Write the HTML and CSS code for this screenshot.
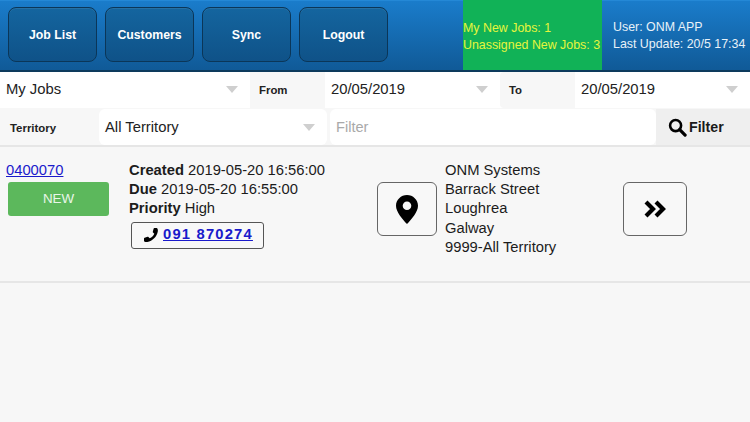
FILE: index.html
```html
<!DOCTYPE html>
<html lang="en">
<head>
<meta charset="utf-8">
<title>Job List</title>
<link rel="stylesheet" href="styles.css">
</head>
<body>
<header class="topbar">
  <nav class="nav">
    <button class="nav-btn">Job List</button>
    <button class="nav-btn">Customers</button>
    <button class="nav-btn">Sync</button>
    <button class="nav-btn">Logout</button>
  </nav>
  <div class="new-jobs">
    <div>My New Jobs: 1</div>
    <div>Unassigned New Jobs: 3</div>
  </div>
  <div class="user-info">
    <div>User: ONM APP</div>
    <div>Last Update: 20/5 17:34</div>
  </div>
</header>
<section class="filter-row row-one">
  <div class="select select-jobs"><span>My Jobs</span><i class="caret"></i></div>
  <div class="label label-from">From</div>
  <div class="select select-date"><span>20/05/2019</span><i class="caret"></i></div>
  <div class="label label-to">To</div>
  <div class="select select-date"><span>20/05/2019</span><i class="caret"></i></div>
</section>
<section class="filter-row row-two">
  <div class="label label-territory">Territory</div>
  <div class="select select-territory"><span>All Territory</span><i class="caret"></i></div>
  <div class="filter-input">Filter</div>
  <div class="filter-btn">
    <svg class="search-icon" viewBox="0 0 20 20" aria-hidden="true"><circle cx="8" cy="8" r="5.8" fill="none" stroke="#000" stroke-width="2.7"/><path d="M12.3 12.3 18 18" stroke="#000" stroke-width="3.4" stroke-linecap="round"/></svg>
    <span>Filter</span>
  </div>
</section>
<main class="jobs">
  <article class="job">
    <div class="job-id">
      <a href="#" class="link">0400070</a>
      <div class="badge">NEW</div>
    </div>
    <div class="job-meta">
      <div><b>Created</b> 2019-05-20 16:56:00</div>
      <div><b>Due</b> 2019-05-20 16:55:00</div>
      <div><b>Priority</b> High</div>
      <div class="phone">
        <svg class="phone-icon" viewBox="0 0 16 16" aria-hidden="true"><path d="M15 11.6v2.2c0 .4-.2.7-.6.9-.9.4-1.800.5-2.700.3C6.300 13.900 2.300 9.900 1.200 4.500 1 3.500 1.100 2.600 1.500 1.700c.2-.4.500-.6.900-.6h2.200c.4 0 .7.200.8.600l.8 3c.1.300 0 .6-.2.800L4.700 6.700c.9 2 2.500 3.600 4.600 4.600l1.300-1.300c.2-.2.5-.3.8-.2l3 .9c.4.100.6.400.6.900z" transform="matrix(-1 0 0 1 16 0)" fill="#000"/></svg>
        <a href="#" class="link phone-link">091 870274</a>
      </div>
    </div>
    <button class="icon-btn map-btn" aria-label="Map">
      <svg class="pin-icon" viewBox="0 0 22 29" aria-hidden="true"><path fill-rule="evenodd" d="M11 0C5 0 0 4.800 0 10.800 0 17 6.500 24.500 11 29c4.500-4.500 11-12 11-18.200C22 4.800 17 0 11 0zm0 6.500a4.300 4.300 0 1 1 0 8.600 4.300 4.300 0 0 1 0-8.600z" fill="#000"/></svg>
    </button>
    <div class="job-address">
      <div>ONM Systems</div>
      <div>Barrack Street</div>
      <div>Loughrea</div>
      <div>Galway</div>
      <div>9999-All Territory</div>
    </div>
    <button class="icon-btn next-btn" aria-label="Open">
      <svg class="next-icon" viewBox="0 0 24 20" aria-hidden="true"><path d="M3 3l7 7-7 7M13 3l7 7-7 7" fill="none" stroke="#000" stroke-width="4.200" stroke-linejoin="miter"/></svg>
    </button>
  </article>
</main>
</body>
</html>
```

FILE: styles.css
```css
* { box-sizing: border-box; }
html, body { margin: 0; height: 100%; }
body {
  width: 750px;
  height: 422px;
  overflow: hidden;
  background: #f7f7f7;
  color: #1c1c1c;
  font-family: "Liberation Sans", Arial, sans-serif;
  font-size: 14.75px;
  display: flex;
  flex-direction: column;
}
.topbar {
  height: 72px;
  flex: none;
  display: flex;
  background: linear-gradient(#1a7ccb, #105a97);
  border-bottom: 2px solid #0d3a5c;
  border-top: 1px solid #2488d6;
}
.nav {
  width: 463px;
  flex: none;
  display: flex;
  gap: 8px;
  padding: 6px 0 0 8px;
}
.nav-btn {
  width: 89px;
  height: 55px;
  border: 1px solid #0b3658;
  border-radius: 8px;
  background: linear-gradient(#14659f, #0f5288);
  color: #fff;
  font: bold 12.3px "Liberation Sans", Arial, sans-serif;
  padding: 0;
  box-shadow: inset 0 1px 0 rgba(255,255,255,.08);
}
.new-jobs {
  width: 139px;
  flex: none;
  margin-top: -1px;
  background: #11b257;
  color: #e6f53c;
  font-size: 12.4px;
  line-height: 17px;
  padding-top: 20px;
  white-space: nowrap;
}
.user-info {
  flex: 1;
  color: #e8f1f8;
  font-size: 12.4px;
  line-height: 17px;
  padding: 18px 0 0 11px;
  white-space: nowrap;
}
.filter-row { display: flex; flex: none; }
.row-one { height: 36px; background: #fff; }
.row-two {
  height: 39px;
  padding-top: 1px;
  background: #f7f7f7;
  border-bottom: 2px solid #e6e6e6;
}
.select {
  display: flex;
  flex: none;
  align-items: center;
  justify-content: space-between;
  background: #fff;
  color: #222;
  font-size: 14.8px;
}
.select-jobs { width: 250px; padding: 0 12px 2px 6px; }
.select-date { width: 175px; padding: 0 12px 2px 6px; }
.select-territory {
  width: 228px;
  padding: 0 12px 0 6px;
  border-radius: 6px;
}
.caret {
  width: 0;
  height: 0;
  border-left: 6px solid transparent;
  border-right: 6px solid transparent;
  border-top: 7px solid #cfcfcf;
}
.label {
  display: flex;
  flex: none;
  align-items: center;
  background: #f7f7f7;
  color: #222;
  font-weight: bold;
  font-size: 11.4px;
}
.label-from { width: 75px; padding: 0 0 0 9px; }
.label-to { width: 75px; padding: 0 0 0 9px; border-radius: 4px 0 0 4px; }
.label-territory { width: 99px; padding: 2px 0 0 10px; }
.filter-input {
  width: 326px;
  flex: none;
  margin-left: 3px;
  display: flex;
  align-items: center;
  padding-left: 6px;
  background: #fff;
  border-radius: 6px;
  color: #a9a9a9;
  font-size: 14.6px;
}
.filter-btn {
  flex: 1;
  display: flex;
  align-items: center;
  gap: 2px;
  padding-left: 12px;
  background: #efefef;
  color: #1a1a1a;
  font-weight: bold;
  font-size: 14.2px;
}
.search-icon { width: 19px; height: 19px; }
.jobs { flex: 1; }
.job {
  height: 136px;
  border-bottom: 2px solid #e6e6e6;
  display: flex;
  align-items: flex-start;
  line-height: 19.2px;
}
.job-id { width: 129px; flex: none; padding: 14px 0 0 6px; }
.link { color: #1a1acb; text-decoration: underline; }
.badge {
  width: 101px;
  height: 34px;
  margin: 2px 0 0 2px;
  display: flex;
  align-items: center;
  justify-content: center;
  background: #5cb85c;
  border-radius: 3px;
  color: #e9f6e9;
  font-size: 13.4px;
  padding-bottom: 2px;
}
.job-meta { width: 248px; flex: none; padding-top: 14px; }
.phone {
  width: 133px;
  height: 27px;
  margin: 3px 0 0 2px;
  display: flex;
  align-items: center;
  gap: 4px;
  padding: 0 0 1px 12px;
  background: #f8f8f8;
  border: 1px solid #555;
  border-radius: 3px;
}
.phone-icon { width: 16px; height: 16px; flex: none; margin-left: -1px; }
.phone-link { font-weight: bold; letter-spacing: 1.2px; }
.icon-btn {
  height: 54px;
  flex: none;
  margin-top: 35px;
  padding: 0;
  display: flex;
  align-items: center;
  justify-content: center;
  background: #f8f8f8;
  border: 1px solid #666;
  border-radius: 6px;
}
.map-btn { width: 60px; }
.next-btn { width: 64px; }
.pin-icon { width: 22px; height: 29px; }
.next-icon { width: 24px; height: 20px; }
.job-address { width: 178px; flex: none; margin-left: 8px; padding-top: 14px; }
```
